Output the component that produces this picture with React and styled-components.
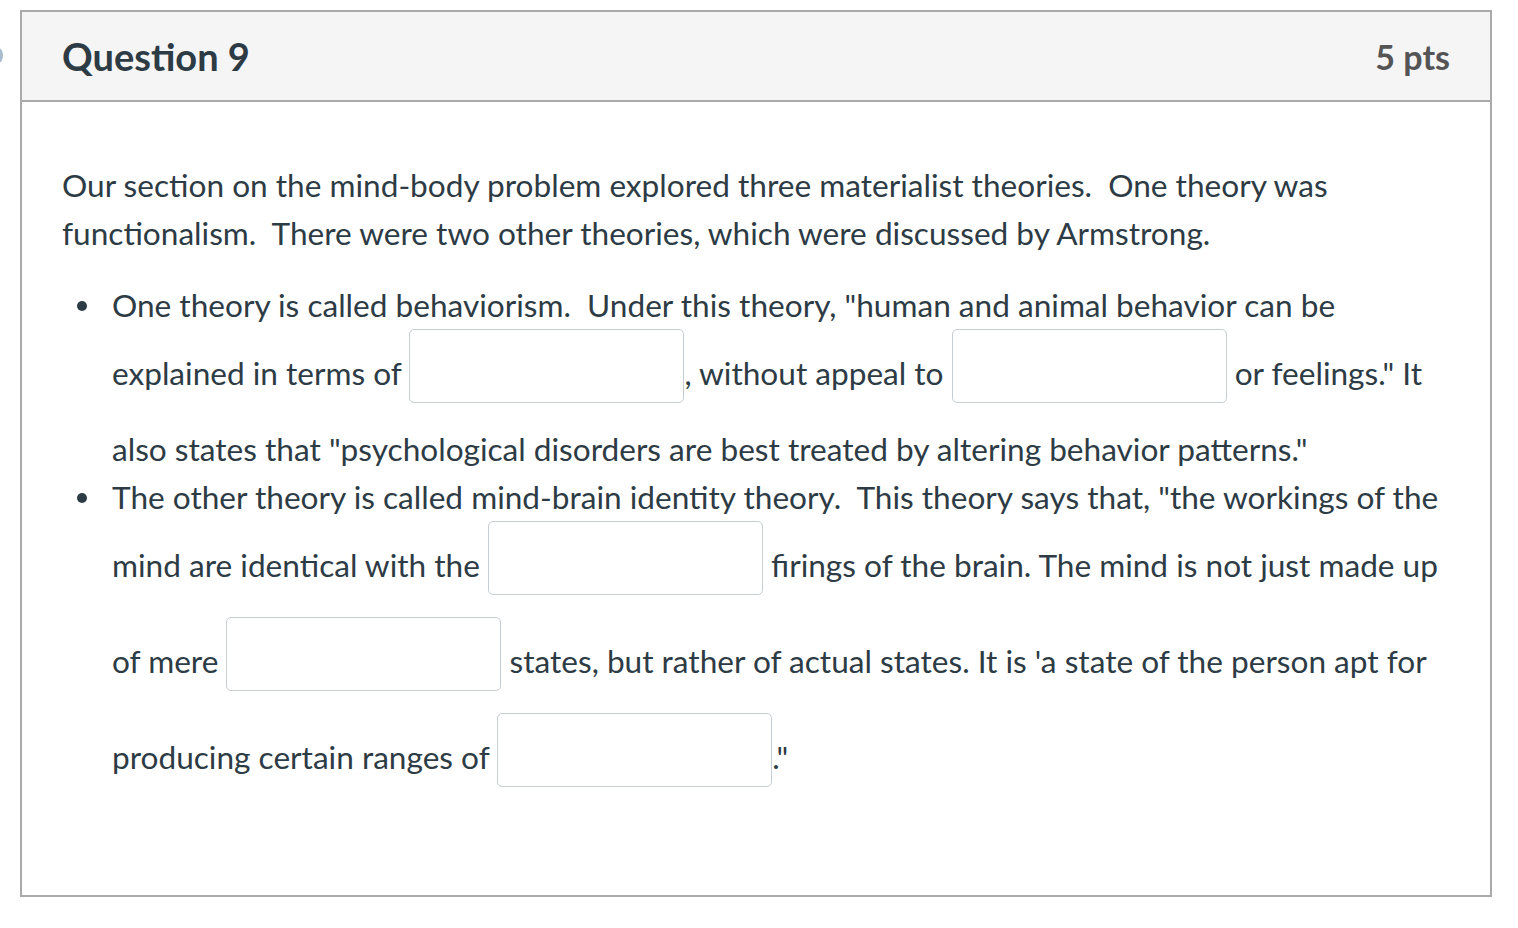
import React from 'react';
import styled, { createGlobalStyle } from 'styled-components';

const GlobalStyle = createGlobalStyle`
  html, body {
    margin: 0;
    padding: 0;
    background: #fff;
  }
  body {
    font-family: Lato, "Open Sans", "Liberation Sans", sans-serif;
    color: #2d3b45;
  }
`;

const Page = styled.div`
  position: relative;
  padding: 10px 26px 30px 20px;
`;

const Flag = styled.span`
  position: absolute;
  left: -6px;
  top: 48px;
  width: 9px;
  height: 15px;
  border-radius: 50%;
  background: #a9bdd0;
`;

const Card = styled.div`
  border: 2px solid #aaa;
  background: #fff;
`;

const Header = styled.div`
  display: flex;
  align-items: center;
  justify-content: space-between;
  height: 88px;
  padding: 0 40px;
  background: #f5f5f5;
  border-bottom: 2px solid #aaa;
`;

const Title = styled.h2`
  margin: 0;
  font-size: 38px;
  font-weight: 700;
  color: #2d3b45;
`;

const Points = styled.span`
  font-size: 34px;
  font-weight: 700;
  color: #555;
`;

const Body = styled.div`
  padding: 59px 40px 86px;
  font-size: 31.6px;
  line-height: 48px;
`;

const Para = styled.p`
  margin: 0 0 24px;
`;

const List = styled.ul`
  margin: 0;
  padding-left: 50px;
  list-style: none;
`;

const Item = styled.li`
  position: relative;
  margin: 0;

  &::before {
    content: '';
    position: absolute;
    left: -35px;
    top: 20px;
    width: 10px;
    height: 10px;
    border-radius: 50%;
    background: #2d3b45;
  }
`;

const Blank = styled.input`
  display: inline-block;
  vertical-align: middle;
  box-sizing: border-box;
  width: 275px;
  height: 74px;
  margin: 0 0 22px;
  padding: 0 10px;
  border: 1px solid #c7cdd1;
  border-radius: 5px;
  background: #fff;
  font-family: inherit;
  font-size: 29px;
  color: #2d3b45;
  outline: none;
`;

const App = () => {
  return (
    <Page>
      <GlobalStyle />
      <Flag />
      <Card>
        <Header>
          <Title>Question 9</Title>
          <Points>5 pts</Points>
        </Header>
        <Body>
          <Para>
            Our section on the mind-body problem explored three materialist theories.&nbsp; One
            theory was functionalism.&nbsp; There were two other theories, which were discussed by
            Armstrong.
          </Para>
          <List>
            <Item>
              One theory is called behaviorism.&nbsp; Under this theory, "human and animal behavior
              can be explained in terms of <Blank aria-label="blank 1" />, without appeal
              to <Blank aria-label="blank 2" /> or feelings." It also states that "psychological
              disorders are best treated by altering behavior patterns."
            </Item>
            <Item>
              The other theory is called mind-brain identity theory.&nbsp; This theory says that,
              "the workings of the mind are identical with the <Blank aria-label="blank 3" /> firings
              of the brain. The mind is not just made up of mere <Blank aria-label="blank 4" /> states,
              but rather of actual states. It is 'a state of the person apt for producing certain
              ranges of <Blank aria-label="blank 5" />."
            </Item>
          </List>
        </Body>
      </Card>
    </Page>
  );
};

export default App;
